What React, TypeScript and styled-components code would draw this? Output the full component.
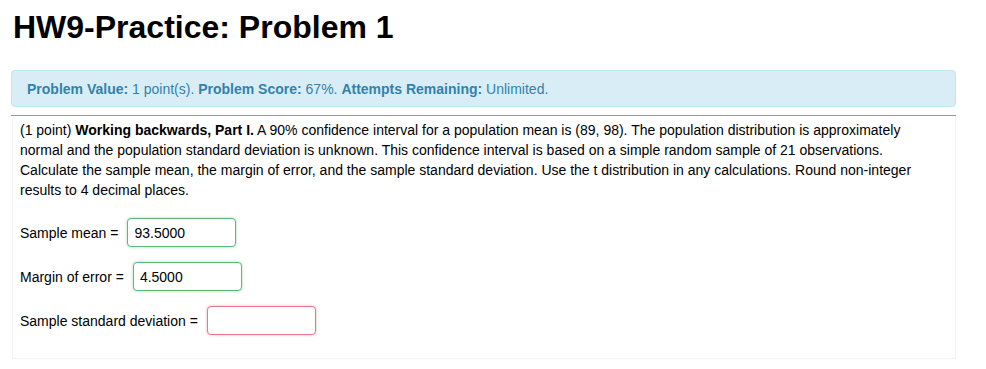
import React from "react";
import styled, { createGlobalStyle } from "styled-components";

const Global = createGlobalStyle`
  html, body { margin: 0; padding: 0; background: #fff; }
  body { font-family: "Liberation Sans", Arial, Helvetica, sans-serif; color: #000; }
`;

const Page = styled.div`
  padding: 0 30px 0 11px;
  width: 945px;
`;

const Title = styled.h2`
  margin: 0;
  padding-top: 8px;
  font-size: 32px;
  line-height: 38px;
  font-weight: bold;
  color: #000;
  padding-left: 2px;
`;

const Alert = styled.div`
  margin-top: 24px;
  box-sizing: border-box;
  height: 37px;
  display: flex;
  align-items: center;
  padding: 0 15px;
  background: #d9edf7;
  border: 1px solid #bce8f1;
  border-radius: 4px;
  color: #3282ab;
  font-size: 14px;
`;

const Rule = styled.hr`
  margin: 8px 0 0 0;
  border: 0;
  border-top: 1px solid #999;
  height: 0;
`;

const ProblemBox = styled.div`
  box-sizing: border-box;
  margin-left: 1px;
  width: 944px;
  height: 243px;
  border: 1px solid #f3f3f3;
  border-top: 0;
  padding: 4px 7px 0 7px;
  font-size: 14px;
  line-height: 20px;
`;

const Text = styled.p`
  margin: 0;
  width: 900px;
`;

const Fields = styled.div`
  margin-top: 18px;
  display: flex;
  flex-direction: column;
  gap: 15px;
`;

const Row = styled.div`
  display: flex;
  align-items: center;
  height: 29px;
`;

const Label = styled.span`
  margin-right: 9px;
`;

const Input = styled.input<{ $state: "ok" | "bad" }>`
  box-sizing: border-box;
  width: 109px;
  height: 29px;
  padding: 0 6px;
  font-family: "Liberation Sans", Arial, sans-serif;
  font-size: 14px;
  color: #000;
  border-radius: 4px;
  outline: none;
  border: 1px solid ${(p) => (p.$state === "ok" ? "#5cb878" : "#e67a84")};
  box-shadow: 0 0 3px ${(p) => (p.$state === "ok" ? "rgba(92,184,120,0.55)" : "rgba(230,110,120,0.55)")};
  background: #fff;
`;

export default function App() {
  return (
    <>
      <Global />
      <Page>
        <Title>HW9-Practice: Problem 1</Title>
        <Alert>
          <span>
            <b>Problem Value:</b> 1 point(s). <b>Problem Score:</b> 67%.{" "}
            <b>Attempts Remaining:</b> Unlimited.
          </span>
        </Alert>
        <Rule />
        <ProblemBox>
          <Text>
            (1 point) <b>Working backwards, Part I.</b> A 90% confidence interval for a
            population mean is (89, 98). The population distribution is approximately
            normal and the population standard deviation is unknown. This confidence
            interval is based on a simple random sample of 21 observations. Calculate the
            sample mean, the margin of error, and the sample standard deviation. Use the t
            distribution in any calculations. Round non-integer results to 4 decimal places.
          </Text>
          <Fields>
            <Row>
              <Label>Sample mean =</Label>
              <Input $state="ok" defaultValue="93.5000" />
            </Row>
            <Row>
              <Label>Margin of error =</Label>
              <Input $state="ok" defaultValue="4.5000" />
            </Row>
            <Row>
              <Label>Sample standard deviation =</Label>
              <Input $state="bad" defaultValue="" />
            </Row>
          </Fields>
        </ProblemBox>
      </Page>
    </>
  );
}
